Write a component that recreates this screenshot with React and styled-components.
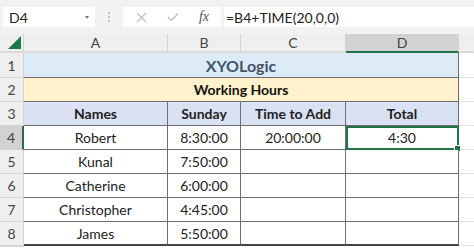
import React from "react";
import styled, { createGlobalStyle } from "styled-components";

const GlobalStyle = createGlobalStyle`
  html, body { margin: 0; padding: 0; background: #ffffff; }
  body { font-family: Lato, "Liberation Sans", sans-serif; overflow: hidden; }
`;

const GREEN = "#217346";
const LINE = "#6f6f6f";

const Page = styled.div`
  width: 474px;
  height: 251px;
  overflow: hidden;
  background: #fff;
`;

const Toolbar = styled.div`
  height: 34px;
  background: #f2f2f2;
  display: flex;
  align-items: center;
  padding-left: 3px;
  box-sizing: border-box;
`;

const NameBox = styled.div`
  width: 92px;
  height: 20px;
  background: #fff;
  display: flex;
  align-items: center;
  justify-content: space-between;
  padding: 0 6px 0 6px;
  box-sizing: border-box;
  font-size: 14px;
  color: #222;
`;

const Caret = styled.span`
  width: 0;
  height: 0;
  border-left: 2px solid transparent;
  border-right: 2px solid transparent;
  border-top: 3px solid #777;
`;

const Dots = styled.div`
  width: 28px;
  display: flex;
  flex-direction: column;
  align-items: center;
  gap: 2px;
  span {
    width: 2px;
    height: 2px;
    background: #b5b5b5;
    border-radius: 1px;
  }
`;

const IconBox = styled.div`
  width: 98px;
  height: 20px;
  background: #fff;
  display: flex;
  align-items: center;
  justify-content: space-between;
  padding: 0 12px 0 13px;
  box-sizing: border-box;
  margin-right: 3px;
`;

const Fx = styled.span`
  font-family: "Liberation Serif", serif;
  font-style: italic;
  font-size: 14px;
  color: #555;
`;

const Formula = styled.div`
  flex: 1;
  height: 20px;
  background: #fff;
  display: flex;
  align-items: center;
  padding-left: 2px;
  font-size: 14px;
  color: #222;
`;

const Grid = styled.div`
  display: grid;
  grid-template-columns: 24px 144px 73px 105px 113px 1fr;
  grid-template-rows: 19px 25px repeat(7, 24px) 1fr;
`;

const ColHead = styled.div`
  background: ${(p) => (p.$active ? "#d2d2d2" : "#efefef")};
  border-right: 1px solid ${(p) => (p.$last ? "transparent" : "#d4d4d4")};
  border-bottom: 2px solid ${(p) => (p.$active ? GREEN : "#dadada")};
  box-sizing: border-box;
  display: flex;
  align-items: center;
  justify-content: center;
  font-size: 14px;
  color: #444;
  position: relative;
`;

const Corner = styled(ColHead)`
  svg {
    position: absolute;
    right: 2px;
    bottom: 2px;
  }
`;

const RowHead = styled.div`
  background: ${(p) => (p.$active ? "#d2d2d2" : "#efefef")};
  border-bottom: 1px solid #d4d4d4;
  border-right: ${(p) => (p.$active ? `2px solid ${GREEN}` : "1px solid #d4d4d4")};
  box-sizing: border-box;
  display: flex;
  align-items: center;
  justify-content: center;
  font-size: 14px;
  color: #444;
`;

const Banner = styled.div`
  grid-column: 2 / span 4;
  background: ${(p) => p.$bg};
  border-right: 1px solid ${LINE};
  border-bottom: 1px solid ${LINE};
  box-sizing: border-box;
  display: flex;
  align-items: center;
  justify-content: center;
  font-weight: bold;
  font-size: ${(p) => p.$size}px;
  color: ${(p) => p.$color};
`;

const Cell = styled.div`
  background: ${(p) => (p.$head ? "#d9e1f2" : "#fff")};
  border-right: 1px solid ${LINE};
  border-bottom: ${(p) => (p.$bottom ? `2px solid #444` : `1px solid ${LINE}`)};
  box-sizing: border-box;
  display: flex;
  align-items: center;
  justify-content: center;
  font-size: 14px;
  font-weight: ${(p) => (p.$head ? "bold" : "normal")};
  color: #222;
  position: relative;
`;

const Selected = styled(Cell)`
  outline: 2px solid ${GREEN};
  outline-offset: -2px;
  &::after {
    content: "";
    position: absolute;
    right: -3px;
    bottom: -3px;
    width: 5px;
    height: 5px;
    background: ${GREEN};
    border: 1px solid #fff;
  }
`;

const Blank = styled.div`
  background: #fff;
  border-bottom: 1px solid #e2e2e2;
`;

const rows = [
  ["Robert", "8:30:00", "20:00:00", "4:30"],
  ["Kunal", "7:50:00", "", ""],
  ["Catherine", "6:00:00", "", ""],
  ["Christopher", "4:45:00", "", ""],
  ["James", "5:50:00", "", ""],
];

export default function App() {
  return (
    <Page>
      <GlobalStyle />
      <Toolbar>
        <NameBox>
          D4 <Caret />
        </NameBox>
        <Dots>
          <span />
          <span />
          <span />
        </Dots>
        <IconBox>
          <svg width="11" height="11" viewBox="0 0 11 11">
            <path d="M1 1 L10 10 M10 1 L1 10" stroke="#bdbdbd" strokeWidth="1.2" />
          </svg>
          <svg width="12" height="10" viewBox="0 0 12 10">
            <path d="M1 5 L4.5 8.5 L11 1.5" stroke="#bdbdbd" strokeWidth="1.2" fill="none" />
          </svg>
          <Fx>fx</Fx>
        </IconBox>
        <Formula>=B4+TIME(20,0,0)</Formula>
      </Toolbar>
      <Grid>
        <Corner>
          <svg width="13" height="13" viewBox="0 0 13 13">
            <path d="M13 0 L13 13 L0 13 Z" fill="#1f7a4a" />
          </svg>
        </Corner>
        <ColHead>A</ColHead>
        <ColHead>B</ColHead>
        <ColHead>C</ColHead>
        <ColHead $active>D</ColHead>
        <ColHead $last />

        <RowHead>1</RowHead>
        <Banner $bg="#ddebf7" $size={16} $color="#44546a">XYOLogic</Banner>
        <Blank />

        <RowHead>2</RowHead>
        <Banner $bg="#fff2cc" $size={14} $color="#111">Working Hours</Banner>
        <Blank />

        <RowHead>3</RowHead>
        <Cell $head>Names</Cell>
        <Cell $head>Sunday</Cell>
        <Cell $head>Time to Add</Cell>
        <Cell $head>Total</Cell>
        <Blank />

        {rows.map((r, i) => {
          const last = i === rows.length - 1;
          return (
            <React.Fragment key={r[0]}>
              <RowHead $active={i === 0}>{i + 4}</RowHead>
              <Cell $bottom={last}>{r[0]}</Cell>
              <Cell $bottom={last}>{r[1]}</Cell>
              <Cell $bottom={last}>{r[2]}</Cell>
              {i === 0 ? <Selected>{r[3]}</Selected> : <Cell $bottom={last}>{r[3]}</Cell>}
              <Blank />
            </React.Fragment>
          );
        })}
        <RowHead />
      </Grid>
    </Page>
  );
}
